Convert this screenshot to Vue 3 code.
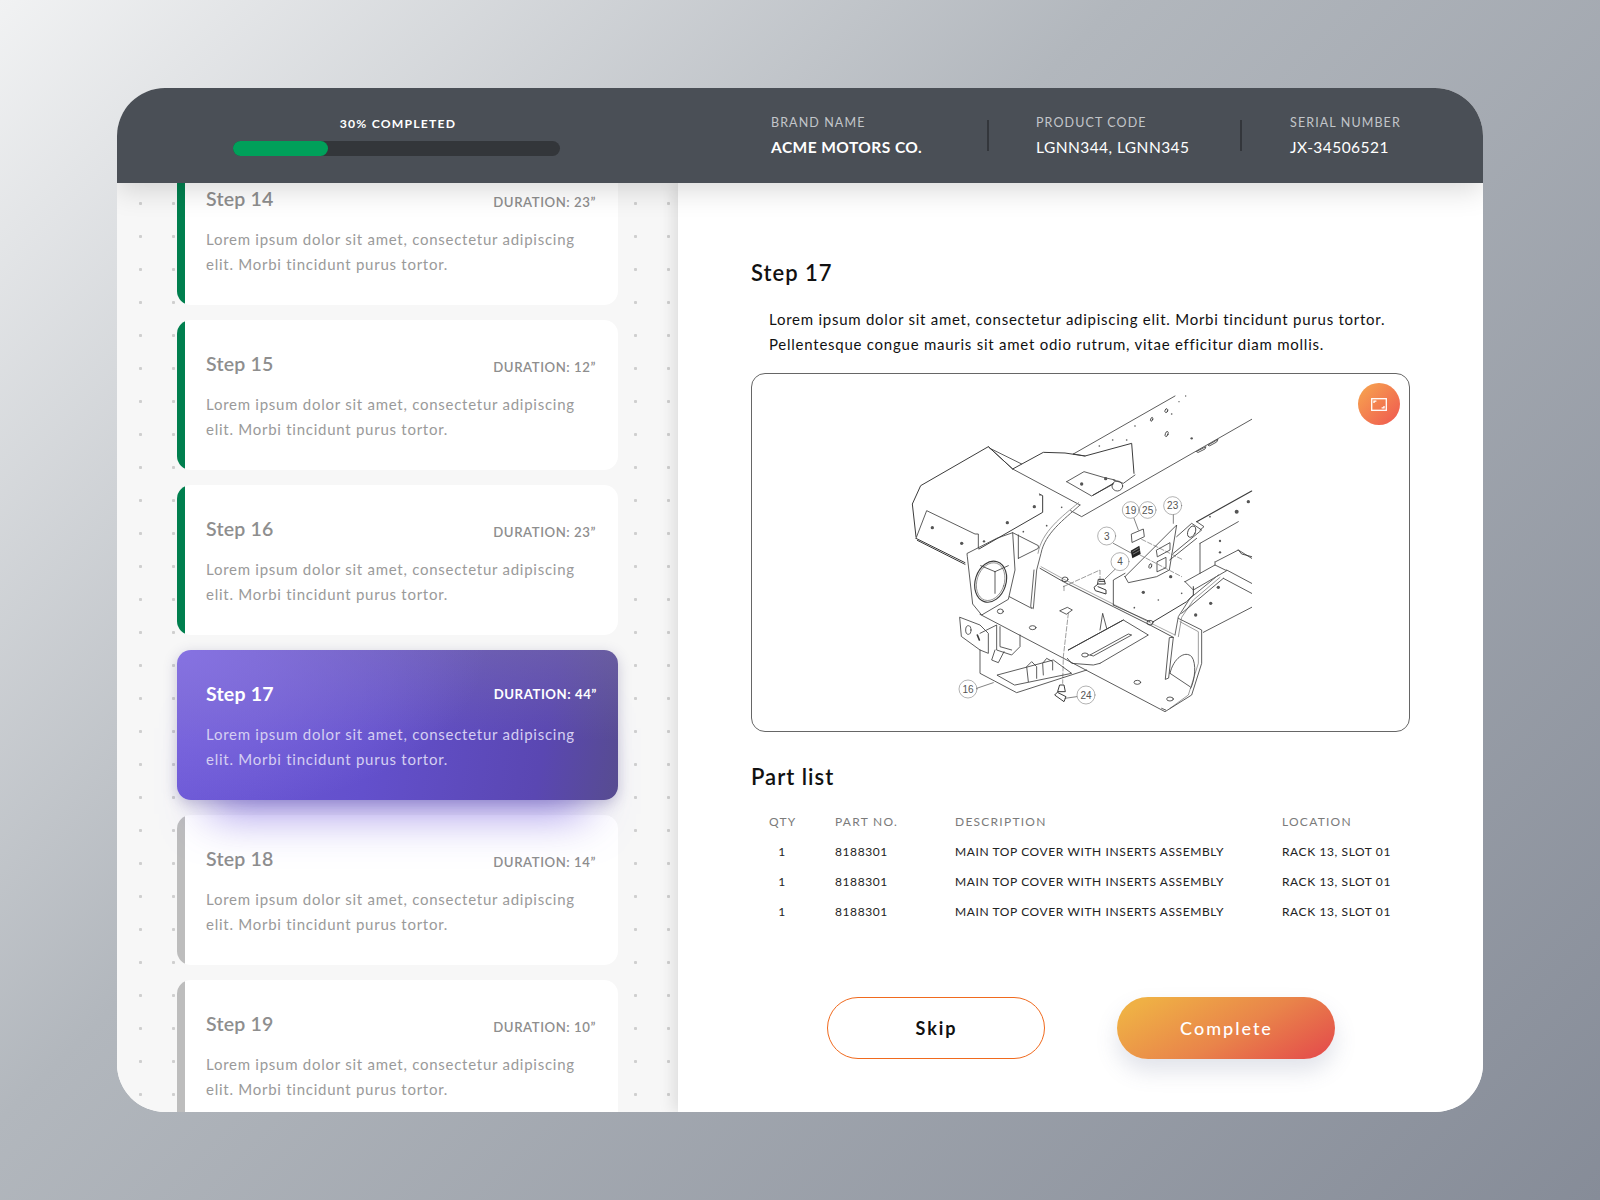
<template>
  <div class="page">
    <div class="window">
      <header class="top-bar">
        <div class="progress">
          <div class="progress-label">30% COMPLETED</div>
          <div class="progress-track"><div class="progress-fill" :style="{ width: progress + 'px' }"></div></div>
        </div>
        <div class="meta meta-brand">
          <div class="meta-label">BRAND NAME</div>
          <div class="meta-value bold">ACME MOTORS CO.</div>
        </div>
        <div class="divider"></div>
        <div class="meta meta-code">
          <div class="meta-label">PRODUCT CODE</div>
          <div class="meta-value">LGNN344, LGNN345</div>
        </div>
        <div class="divider"></div>
        <div class="meta meta-serial">
          <div class="meta-label">SERIAL NUMBER</div>
          <div class="meta-value">JX-34506521</div>
        </div>
      </header>

      <div class="content">
        <aside class="sidebar">
          <div class="step-list">
            <div
              v-for="step in steps"
              :key="step.num"
              class="step-card"
              :class="[step.state]"
            >
              <div class="step-bar"></div>
              <div class="step-body">
                <div class="step-head">
                  <span class="step-title">Step {{ step.num }}</span>
                  <span class="step-duration">DURATION: {{ step.duration }}”</span>
                </div>
                <p class="step-text">Lorem ipsum dolor sit amet, consectetur adipiscing elit. Morbi tincidunt purus tortor.</p>
              </div>
            </div>
          </div>
        </aside>

        <main class="detail">
          <h2 class="detail-title">Step 17</h2>
          <p class="detail-text">
            Lorem ipsum dolor sit amet, consectetur adipiscing elit. Morbi tincidunt purus tortor.<br />
            Pellentesque congue mauris sit amet odio rutrum, vitae efficitur diam mollis.
          </p>

          <div class="figure">
            <svg class="drawing" viewBox="0 0 1200 1050" fill="none" stroke="#3c3c3c" stroke-width="2.5" stroke-linejoin="round" stroke-linecap="round">
              <!-- long beam -->
              <path d="M580 222 885 48M1115 118 605 410 572 392" />
              <path d="M108 470 97 372 122 317 325 200 398 267 490 217 555 219 615 228 755 190 762 280" stroke-width="3" />
              <path d="M325 200 398 267M330 205 425 252M580 222 615 228" />
              <path d="M398 267 600 375" />
              <!-- left box -->
              <path d="M108 475 140 392 285 462 295 462 295 505" />
              <path d="M297 507 488 397 488 347 478 342" stroke-width="3" />
              <path d="M108 475 255 548M112 481 255 553" stroke-width="3" />
              <path d="M262 530 278 672 305 705 385 658 405 570 398 458 350 475 262 520Z" />
              <ellipse cx="332" cy="605" rx="46" ry="63" transform="rotate(18 332 605)" stroke-width="3.5" />
              <ellipse cx="332" cy="605" rx="41" ry="58" transform="rotate(18 332 605)" stroke-width="1.5" />
              <path d="M345 575 385 557M345 575 345 640M345 575 302 557" />
              <path d="M398 458 475 497 475 505 415 535M415 465 415 535M388 650 455 685" />
              <!-- curved rail -->
              <path d="M600 375C550 420 495 460 483 520L470 570 460 686 452 680 462 570" stroke="#666" stroke-width="3" />
              <path d="M596 368C545 410 485 455 474 520" stroke="#888" />
              <path d="M480 565 550 605 700 680 810 735 880 772" stroke="#555" stroke-width="3" />
              <path d="M483 560 552 598 705 675 812 729 885 765" stroke="#999" />
              <!-- top plate -->
              <path d="M560 305 612 275 670 292 705 300M560 305 635 348 700 310" />
              <path d="M640 345 700 312" stroke-width="3" />
              <ellipse cx="712" cy="318" rx="16" ry="15" />
              <path d="M700 300 730 310 765 285" />
              <!-- bottom plate -->
              <path d="M300 703 855 995 935 945 965 850 965 750 895 715M845 985 857 990" />
              <path d="M870 985 925 945 955 850 955 755 900 725" stroke-width="1.5" />
              <path d="M870 880C880 835 915 810 935 830 950 850 945 900 932 925M870 880 930 920" stroke-width="2.5" />
              <path d="M856 897 868 773 880 772 866 893Z" />
              <path d="M1115 682 970 757" />
              <!-- right beam -->
              <path d="M950 425 1115 333" stroke-width="3.5" />
              <path d="M950 425 972 440 960 450M960 490 1075 425M960 490 960 580M1007 545 1075 510 1115 535M1040 570 1115 610" />
              <path d="M1075 510 1085 522 1115 530" stroke="#333" stroke-width="2.5" />
              <path d="M915 605 1005 555 1040 572 940 630 915 605Z" />
              <path d="M1005 545 1005 555" />
              <path d="M885 765 895 710 930 655 1015 585" stroke="#666" stroke-width="3" />
              <path d="M895 770 905 712 940 660 1020 592" stroke="#888" />
              <path d="M1030 595 1115 640M1030 595 905 700" />
              <!-- middle panel -->
              <path d="M700 675 700 600 735 580M700 675 810 725" />
              <path d="M820 725 920 665 940 645 940 620" stroke-width="3" />
              <path d="M735 590 890 435 868 570 830 590 745 608 735 590Z" />
              <path d="M890 470 935 430 965 450 880 520M869 540 950 475" />
              <ellipse cx="935" cy="455" rx="11" ry="18" transform="rotate(25 935 455)" />
              <path d="M830 510 870 488 870 510 833 530ZM832 545 858 532 858 563 832 575Z" />
              <path d="M755 462 790 447 793 470 757 487Z" />
              <path d="M785 478 910 540M780 525 905 590M550 620 660 570 660 600M552 618 552 632M565 700 550 830 548 910" stroke-dasharray="14 6" stroke-width="1.5" />
              <!-- lower bracket -->
              <path d="M240 712 300 735 325 760 325 820 300 810 245 770Z" />
              <path d="M300 760 350 735 350 810 395 825 420 800 420 765M300 810 300 880 410 938 620 870M360 740 360 800 395 810" />
              <path d="M345 810 335 840 355 848 372 815" />
              <path d="M352 885 520 840 575 880 405 915Z" stroke-width="2.5" />
              <path d="M445 905 440 860 455 845 470 860 470 895M490 885 488 850 500 835 518 845 518 870" />
              <ellipse cx="265" cy="750" rx="8" ry="13" />
              <path d="M292 765 298 780" stroke-width="5" />
              <path d="M562 835 575 850 640 855 660 850M565 810 730 720 805 765 660 850" />
              <path d="M565 810 730 720" stroke-width="3" />
              <path d="M630 825 745 762 755 765 640 828 630 825Z" />
              <ellipse cx="615" cy="825" rx="10" ry="6" />
              <path d="M660 750 668 700 680 745" />
              <path d="M540 692 562 682 577 690 560 702Z" />
              <!-- ovals -->
              <ellipse cx="458" cy="743" rx="10" ry="6" />
              <ellipse cx="772" cy="907" rx="10" ry="6" />
              <ellipse cx="870" cy="957" rx="10" ry="6" />
              <ellipse cx="361" cy="694" rx="9" ry="7" />
              <ellipse cx="555" cy="598" rx="9" ry="7" />
              <ellipse cx="810" cy="728" rx="9" ry="7" />
              <path d="M950 214 978 200 975 207 955 217ZM985 195 1014 178 1010 186 990 197Z" />
              <ellipse cx="815" cy="118" rx="3" ry="6" transform="rotate(20 815 118)" />
              <ellipse cx="860" cy="162" rx="4" ry="8" transform="rotate(20 860 162)" />
              <ellipse cx="859" cy="92" rx="4" ry="6" transform="rotate(20 859 92)" />
              <ellipse cx="811" cy="558" rx="4" ry="7" transform="rotate(20 811 558)" />
              <!-- fasteners -->
              <path d="M656 598H672L676 612H654ZM658 604H674M654 612 642 622 646 632 678 642 678 630 654 620" stroke-width="3" />
              <path d="M540 915H552L556 935H534ZM534 935 524 945 552 965 558 950 534 938" stroke-width="3" />
              <!-- bolts -->
              <g fill="#555" stroke="none">
                <circle v-for="(b, i) in bolts" :key="i" :cx="b[0]" :cy="b[1]" :r="b[2]" />
                <path d="M752 512 778 497 782 522 757 535Z" fill="#222" />
              </g>
              <path d="M758 515 775 505M760 522 778 512" stroke="#ccc" stroke-width="1.5" />
              <!-- callouts -->
              <g stroke="#666" stroke-width="1.5">
                <circle cx="752" cy="390" r="25" />
                <circle cx="803" cy="390" r="25" />
                <circle cx="878" cy="377" r="27" />
                <circle cx="680" cy="468" r="27" />
                <circle cx="720" cy="545" r="27" />
                <circle cx="264" cy="927" r="27" />
                <circle cx="618" cy="945" r="27" />
                <path d="M762 415 775 450M700 490 755 520M705 568 675 597M880 405 880 430M290 925 340 908M590 950 555 955" stroke="#444" stroke-width="2" />
              </g>
              <g class="callout-text" fill="#555" stroke="none" text-anchor="middle">
                <text x="752" y="401">19</text>
                <text x="803" y="401">25</text>
                <text x="878" y="388">23</text>
                <text x="680" y="479">3</text>
                <text x="720" y="556">4</text>
                <text x="264" y="938">16</text>
                <text x="618" y="956">24</text>
              </g>
            </svg>
            <button class="expand-btn">
              <svg width="16" height="13" viewBox="0 0 16 13" fill="none" stroke="#fff" stroke-width="1.3">
                <rect x="0.7" y="0.7" width="14.6" height="11.6" />
                <path d="M3 5V3.2H5.4M13 8V9.8H10.6" />
              </svg>
            </button>
          </div>

          <h2 class="detail-title parts-title">Part list</h2>
          <table class="parts">
            <thead>
              <tr>
                <th>QTY</th>
                <th>PART NO.</th>
                <th>DESCRIPTION</th>
                <th>LOCATION</th>
              </tr>
            </thead>
            <tbody>
              <tr v-for="n in 3" :key="n">
                <td>1</td>
                <td>8188301</td>
                <td>MAIN TOP COVER WITH INSERTS ASSEMBLY</td>
                <td>RACK 13, SLOT 01</td>
              </tr>
            </tbody>
          </table>

          <div class="actions">
            <button class="btn btn-skip">Skip</button>
            <button class="btn btn-complete">Complete</button>
          </div>
        </main>
      </div>
    </div>
  </div>
</template>

<script setup>
const progress = 95

const steps = [
  { num: 14, duration: 23, state: 'done' },
  { num: 15, duration: 12, state: 'done' },
  { num: 16, duration: 23, state: 'done' },
  { num: 17, duration: 44, state: 'active' },
  { num: 18, duration: 14, state: 'todo' },
  { num: 19, duration: 10, state: 'todo' }
]

const bolts = [
  [605, 312, 5], [677, 296, 5], [463, 380, 5], [382, 428, 5], [245, 490, 5], [157, 443, 5], [312, 484, 3.5],
  [430, 455, 2.5], [500, 437, 2.5], [545, 382, 2.5], [480, 345, 2.5], [658, 198, 2.5], [698, 180, 2.5], [740, 180, 2.5],
  [765, 138, 2.5], [897, 65, 2], [917, 48, 2], [935, 175, 3.5], [1020, 483, 3.5], [1020, 517, 3.5],
  [990, 410, 2.5], [1070, 395, 6], [1105, 365, 5], [872, 590, 5], [790, 637, 5], [835, 660, 2.5],
  [763, 683, 2.5], [905, 640, 2.5], [1015, 622, 5], [992, 670, 5], [947, 705, 5], [875, 102, 2.5]
]
</script>

<style>
html,
body {
  margin: 0;
}
</style>

<style scoped>
.page {
  box-sizing: border-box;
  width: 1600px;
  height: 1200px;
  padding: 88px 0 0 117px;
  background: linear-gradient(135deg, #f1f2f3 0%, #b2b7bd 40%, #868c98 100%);
  font-family: Lato, 'Liberation Sans', sans-serif;
}

.window {
  display: flex;
  flex-direction: column;
  width: 1366px;
  height: 1024px;
  border-radius: 48px;
  overflow: hidden;
  background: #fff;
}

.top-bar {
  position: relative;
  z-index: 5;
  display: flex;
  align-items: center;
  flex: none;
  height: 95px;
  padding-left: 116px;
  background: #4a4f56;
  box-shadow: 0 6px 28px rgba(0, 0, 0, 0.16);
}

.progress {
  flex: none;
  width: 327px;
  margin: 1px 211px 0 0;
  text-align: center;
}

.progress-label {
  padding-left: 3px;
  font-size: 12.2px;
  font-weight: 700;
  line-height: 16px;
  letter-spacing: 1.2px;
  color: #fff;
}

.progress-track {
  height: 15px;
  margin-top: 9px;
  border-radius: 8px;
  background: #33363a;
}

.progress-fill {
  height: 100%;
  border-radius: 8px;
  background: #00a05a;
}

.meta {
  flex: none;
  white-space: nowrap;
}

.meta-brand {
  width: 216px;
}

.meta-code {
  width: 251px;
  box-sizing: border-box;
  padding-left: 47px;
}

.meta-serial {
  padding-left: 48px;
}

.meta-label {
  font-size: 12.5px;
  line-height: 16px;
  letter-spacing: 1.1px;
  color: #c3c6ca;
}

.meta-value {
  margin-top: 6px;
  font-size: 15.5px;
  line-height: 20px;
  letter-spacing: 0.45px;
  color: #fff;
}

.meta-value.bold {
  font-weight: 700;
}

.divider {
  flex: none;
  width: 2px;
  height: 31px;
  background: #33363b;
}

.content {
  display: flex;
  flex: 1;
  min-height: 0;
}

.sidebar {
  flex: none;
  width: 561px;
  padding-left: 60px;
  box-sizing: border-box;
  overflow: hidden;
  background-color: #f7f7f7;
  background-image: radial-gradient(circle, #cfcfcf 1.3px, transparent 1.8px);
  background-size: 33px 33px;
  background-position: 7px 4px;
}

.step-list {
  display: flex;
  flex-direction: column;
  gap: 15px;
  width: 441px;
  margin-top: -28px;
}

.step-card {
  position: relative;
  display: flex;
  flex: none;
  height: 150px;
  border-radius: 14px;
  overflow: hidden;
  background: #fff;
}

.step-bar {
  flex: none;
  width: 8px;
}

.done .step-bar {
  background: #007f4e;
}

.todo .step-bar {
  background: #bdbdbd;
}

.step-body {
  flex: 1;
  padding: 32px 22px 0 21px;
}

.step-head {
  display: flex;
  justify-content: space-between;
  align-items: baseline;
}

.step-title {
  font-size: 19.5px;
  font-weight: 600;
  line-height: 24px;
  letter-spacing: 0.2px;
  color: #8e8e8e;
}

.step-duration {
  position: relative;
  top: 1px;
  font-size: 13.2px;
  font-weight: 600;
  letter-spacing: 0.55px;
  color: #8e8e8e;
}

.step-text {
  margin: 16px 0 0;
  font-size: 15px;
  line-height: 25px;
  letter-spacing: 0.74px;
  color: #9a9a9a;
}

.active {
  z-index: 2;
  overflow: visible;
  background:
    radial-gradient(ellipse 70% 110% at 0 0, #8672e2 0, rgba(134, 114, 226, 0) 100%),
    linear-gradient(to bottom, rgba(125, 115, 165, 0.45), rgba(125, 115, 165, 0) 60%),
    linear-gradient(100deg, #6e5ad8 0%, #6350cc 45%, #5a47b2 82%, #574c90 100%);
  box-shadow: 0 4px 14px rgba(60, 50, 120, 0.25), 0 46px 46px -32px rgba(98, 72, 220, 0.6);
}

.active .step-title {
  font-weight: 700;
  color: #fff;
}

.active .step-duration {
  top: -2px;
  right: -1px;
  font-weight: 700;
  color: #fff;
}

.active .step-text {
  color: #d5cff2;
}

.detail {
  position: relative;
  flex: 1;
  min-width: 0;
  padding: 76px 73px 0;
  background: #fff;
  box-shadow: -5px 0 14px rgba(0, 0, 0, 0.1);
}

.detail-title {
  margin: 0;
  font-size: 22px;
  font-weight: 600;
  line-height: 28px;
  letter-spacing: 1px;
  color: #111;
}

.detail-text {
  margin: 20px 0 16px;
  padding-left: 18px;
  font-size: 15px;
  line-height: 25px;
  letter-spacing: 0.75px;
  color: #111;
}

.figure {
  position: relative;
  box-sizing: border-box;
  display: flex;
  height: 359px;
  padding: 6px 0 0 128px;
  border: 1px solid #666;
  border-radius: 14px;
}

.drawing {
  width: 400px;
  height: 350px;
}

.callout-text {
  font-family: 'Liberation Sans', sans-serif;
  font-size: 30px;
}

.expand-btn {
  position: absolute;
  top: 9px;
  right: 9px;
  display: flex;
  align-items: center;
  justify-content: center;
  width: 42px;
  height: 42px;
  padding: 0;
  border: none;
  border-radius: 50%;
  background: linear-gradient(135deg, #f7a84f, #ef5650);
}

.parts-title {
  margin-top: 31px;
}

.parts {
  width: 641px;
  margin: 15px 0 0 18px;
  border-collapse: collapse;
  table-layout: fixed;
  font-size: 12px;
}

.parts th,
.parts td {
  height: 30px;
  padding: 0;
  text-align: left;
  font-weight: 400;
  letter-spacing: 0.6px;
}

.parts th {
  letter-spacing: 1.25px;
  color: #7b7b7b;
}

.parts td {
  color: #222;
}

.parts th:nth-child(1),
.parts td:nth-child(1) {
  width: 26px;
  padding-right: 40px;
  text-align: center;
}

.parts th:nth-child(2) {
  width: 120px;
}

.parts th:nth-child(3) {
  width: 327px;
}

.actions {
  display: flex;
  justify-content: center;
  gap: 72px;
  margin-top: 71px;
}

.btn {
  width: 218px;
  height: 62px;
  border-radius: 31px;
  font-family: inherit;
  font-size: 18px;
  letter-spacing: 2px;
  text-indent: 2px;
}

.btn-skip {
  border: 1px solid #f06a1e;
  background: #fff;
  font-weight: 700;
  color: #111;
}

.btn-complete {
  border: none;
  background: linear-gradient(150deg, #efb045 10%, #e9844a 55%, #e44e4b 95%);
  box-shadow: 0 12px 22px rgba(90, 100, 140, 0.18);
  font-weight: 500;
  color: #fff;
}
</style>
